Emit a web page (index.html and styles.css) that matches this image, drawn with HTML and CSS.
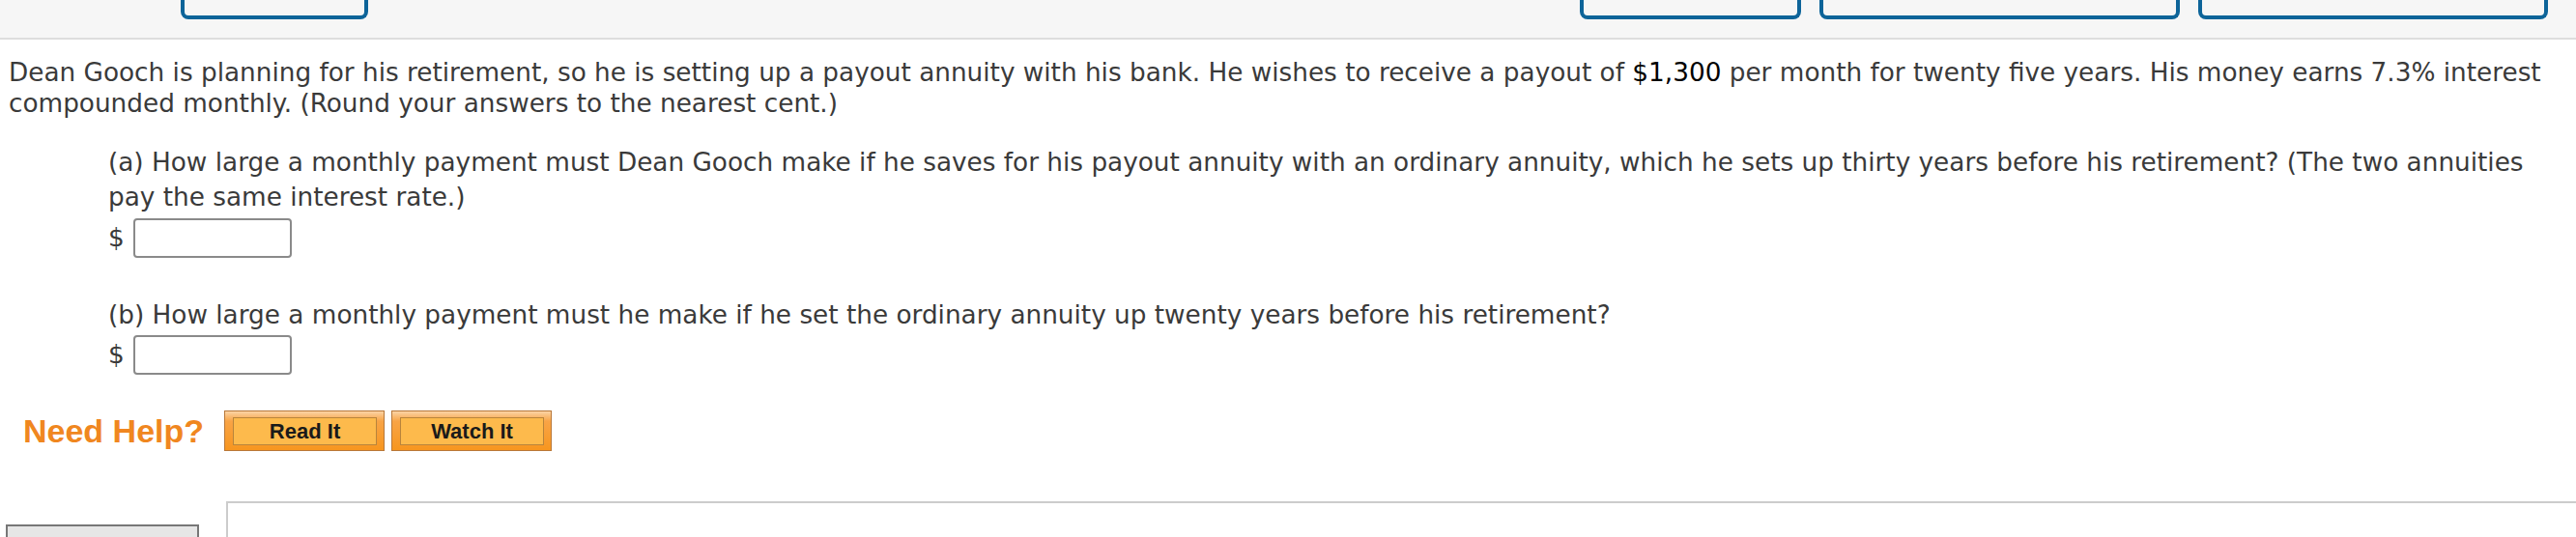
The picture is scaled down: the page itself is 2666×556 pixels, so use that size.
FILE: index.html
```html
<!DOCTYPE html>
<html>
<head>
<meta charset="utf-8">
<link rel="stylesheet" href="styles.css">
</head>
<body>
<div class="topbar">
  <div class="tab tab-a"></div>
  <div class="tab-group">
    <div class="tab tab-b"></div>
    <div class="tab tab-c"></div>
    <div class="tab tab-d"></div>
  </div>
</div>
<div class="question">
  <p class="stem">Dean Gooch is planning for his retirement, so he is setting up a payout annuity with his bank. He wishes to receive a payout of <span class="num">$1,300</span> per month for twenty five years. His money earns 7.3% interest compounded monthly. (Round your answers to the nearest cent.)</p>
  <div class="parts">
    <div class="part">
      <p class="part-text">(a) How large a monthly payment must Dean Gooch make if he saves for his payout annuity with an ordinary annuity, which he sets up thirty years before his retirement? (The two annuities pay the same interest rate.)</p>
      <div class="answer"><span class="dollar">$</span><input class="field" type="text"></div>
    </div>
    <div class="part part-b">
      <p class="part-text">(b) How large a monthly payment must he make if he set the ordinary annuity up twenty years before his retirement?</p>
      <div class="answer"><span class="dollar">$</span><input class="field" type="text"></div>
    </div>
  </div>
  <div class="help">
    <span class="help-label">Need Help?</span>
    <a class="help-btn"><span class="help-inner">Read It</span></a>
    <a class="help-btn"><span class="help-inner">Watch It</span></a>
  </div>
</div>
<div class="footer">
  <button class="submit">Submit Answer</button>
  <div class="notes"></div>
</div>
</body>
</html>
```
FILE: styles.css
```css
html, body {
  margin: 0;
  padding: 0;
  background: #ffffff;
  overflow: hidden;
}
body {
  width: 2666px;
  height: 556px;
  font-family: "DejaVu Sans", Verdana, sans-serif;
  color: #3a3a3a;
}
.topbar {
  height: 39px;
  background: #f6f6f6;
  border-bottom: 2px solid #dddddd;
  display: flex;
  align-items: flex-start;
  padding-left: 187px;
  padding-right: 29px;
}
.tab {
  height: 20px;
  box-sizing: border-box;
  border: 4px solid #0d6499;
  border-top: none;
  border-radius: 0 0 8px 8px;
  background: #f6f6f6;
}
.tab-a { width: 194px; }
.tab-group {
  margin-left: auto;
  display: flex;
  gap: 19px;
}
.tab-b { width: 229px; }
.tab-c { width: 373px; }
.tab-d { width: 362px; }
.question {
  padding: 18px 12px 0 9px;
}
.stem {
  margin: 0;
  font-size: 26.3px;
  line-height: 32px;
}
.num { color: #000000; }
.parts {
  margin-left: 103px;
  margin-top: 27px;
}
.part-text {
  margin: 0;
  font-size: 26.3px;
  line-height: 36px;
}
.answer {
  display: flex;
  align-items: center;
  gap: 9px;
  margin-top: 4px;
}
.dollar {
  font-size: 26.3px;
  line-height: 41px;
}
.field {
  width: 164px;
  height: 41px;
  box-sizing: border-box;
  border: 2px solid #8a8a8a;
  border-radius: 4px;
  margin: 0;
  padding: 0;
  background: #ffffff;
}
.part-b { margin-top: 41px; }
.part-b .answer { margin-top: 3px; }
.help {
  display: flex;
  align-items: center;
  margin-top: 37px;
  margin-left: 15px;
}
.help-label {
  font-family: "Liberation Sans", Arial, sans-serif;
  font-weight: bold;
  font-size: 34px;
  color: #f0871f;
  margin-right: 21px;
}
.help-btn {
  display: flex;
  width: 166px;
  height: 42px;
  box-sizing: border-box;
  border: 1px solid #b8783a;
  background: linear-gradient(#fbd3a4 0%, #f8a446 25%, #f7961f 100%);
  padding: 6px 7px 5px 8px;
  margin-right: 7px;
}
.help-inner {
  flex: 1;
  display: flex;
  align-items: center;
  justify-content: center;
  border: 1px solid #b8843c;
  background: #fdba4c;
  font-family: "Liberation Sans", Arial, sans-serif;
  font-weight: bold;
  font-size: 22px;
  color: #1a1a1a;
}
.footer {
  display: flex;
  align-items: flex-start;
  margin-top: 52px;
  padding-left: 6px;
}
.submit {
  margin-top: 24px;
  width: 200px;
  height: 44px;
  box-sizing: border-box;
  border: 2px solid #777777;
  background: #e6e6e6;
  font-family: "Liberation Sans", Arial, sans-serif;
  font-size: 24px;
  color: #222222;
  text-align: left;
  padding: 6px 0 0 14px;
}
.notes {
  margin-left: 28px;
  flex: 1;
  height: 80px;
  border: 2px solid #cccccc;
  border-right: none;
}
```
